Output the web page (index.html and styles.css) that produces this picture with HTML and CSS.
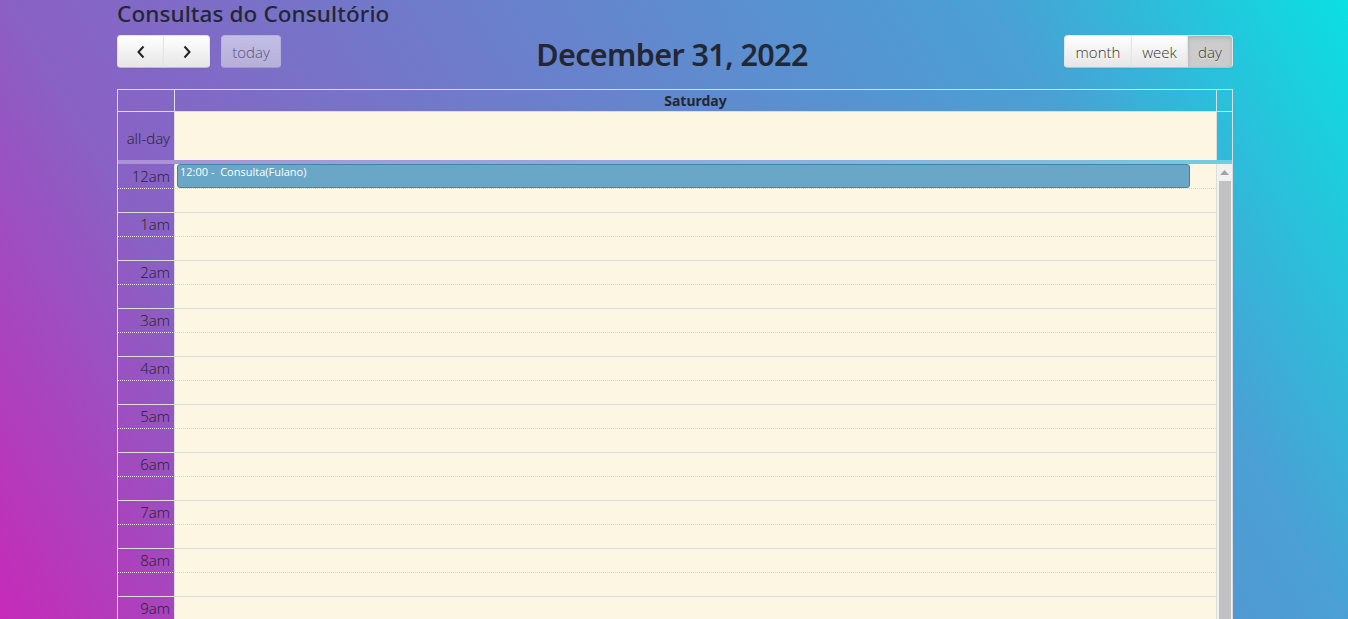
FILE: index.html
```html
<!DOCTYPE html>
<html lang="pt-BR">
<head>
<meta charset="utf-8">
<title>Consultas do Consultório</title>
<link rel="stylesheet" href="styles.css">
</head>
<body>
<div class="page">
  <h2 class="page-title">Consultas do Consultório</h2>
  <div class="toolbar">
    <div class="tb-left">
      <div class="btn-group">
        <button class="btn btn-icon" aria-label="prev"><svg width="10" height="14" viewBox="0 0 10 14"><path d="M7.5 1.5 L2.5 7 L7.5 12.5" fill="none" stroke="#222" stroke-width="2"/></svg></button>
        <button class="btn btn-icon" aria-label="next"><svg width="10" height="14" viewBox="0 0 10 14"><path d="M2.5 1.5 L7.5 7 L2.5 12.5" fill="none" stroke="#222" stroke-width="2"/></svg></button>
      </div>
      <button class="btn btn-single btn-disabled">today</button>
    </div>
    <h1 class="date-title">December 31, 2022</h1>
    <div class="tb-right">
      <div class="btn-group">
        <button class="btn">month</button>
        <button class="btn">week</button>
        <button class="btn btn-active">day</button>
      </div>
    </div>
  </div>

  <div class="cal">
    <div class="row head-row">
      <div class="axis"></div>
      <div class="day-col day-head">Saturday</div>
      <div class="gutter"></div>
    </div>
    <div class="row allday-row">
      <div class="axis axis-label">all-day</div>
      <div class="day-col allday-cell"></div>
      <div class="gutter gutter-fill"></div>
    </div>
    <div class="divider"></div>
    <div class="row body-row">
      <div class="time-grid">
        <div class="slot hour first"><div class="slot-axis">12am</div><div class="slot-cell"></div></div>
        <div class="slot half"><div class="slot-axis"></div><div class="slot-cell"></div></div>
        <div class="slot hour"><div class="slot-axis">1am</div><div class="slot-cell"></div></div>
        <div class="slot half"><div class="slot-axis"></div><div class="slot-cell"></div></div>
        <div class="slot hour"><div class="slot-axis">2am</div><div class="slot-cell"></div></div>
        <div class="slot half"><div class="slot-axis"></div><div class="slot-cell"></div></div>
        <div class="slot hour"><div class="slot-axis">3am</div><div class="slot-cell"></div></div>
        <div class="slot half"><div class="slot-axis"></div><div class="slot-cell"></div></div>
        <div class="slot hour"><div class="slot-axis">4am</div><div class="slot-cell"></div></div>
        <div class="slot half"><div class="slot-axis"></div><div class="slot-cell"></div></div>
        <div class="slot hour"><div class="slot-axis">5am</div><div class="slot-cell"></div></div>
        <div class="slot half"><div class="slot-axis"></div><div class="slot-cell"></div></div>
        <div class="slot hour"><div class="slot-axis">6am</div><div class="slot-cell"></div></div>
        <div class="slot half"><div class="slot-axis"></div><div class="slot-cell"></div></div>
        <div class="slot hour"><div class="slot-axis">7am</div><div class="slot-cell"></div></div>
        <div class="slot half"><div class="slot-axis"></div><div class="slot-cell"></div></div>
        <div class="slot hour"><div class="slot-axis">8am</div><div class="slot-cell"></div></div>
        <div class="slot half"><div class="slot-axis"></div><div class="slot-cell"></div></div>
        <div class="slot hour"><div class="slot-axis">9am</div><div class="slot-cell"></div></div>
        <div class="slot half"><div class="slot-axis"></div><div class="slot-cell"></div></div>
        <div class="slot hour"><div class="slot-axis">10am</div><div class="slot-cell"></div></div>
        <div class="slot half"><div class="slot-axis"></div><div class="slot-cell"></div></div>
        <div class="event">12:00 - &nbsp;Consulta(Fulano)</div>
      </div>
      <div class="scrollbar">
        <div class="sb-arrow"><svg width="9" height="5" viewBox="0 0 9 5"><path d="M0 5 L4.5 0 L9 5 Z" fill="#a3a3a3"/></svg></div>
        <div class="sb-thumb"></div>
      </div>
    </div>
  </div>
</div>
</body>
</html>
```

FILE: styles.css
```css
html, body {
  margin: 0;
  padding: 0;
  height: 100%;
  overflow: hidden;
}
body {
  background: linear-gradient(60deg, #c62ab8 0%, #8a60c4 21%, #4aa0d4 79%, #0ae0e2 100%);
  font-family: "Open Sans", "DejaVu Sans", sans-serif;
  color: #212529;
}
.page {
  width: 1116px;
  margin: 0 0 0 117px;
}
.page-title {
  margin: 0;
  height: 30px;
  font-family: "Noto Sans", "Open Sans", sans-serif;
  font-size: 22.5px;
  font-weight: 500;
  line-height: 28px;
  letter-spacing: 0.1px;
  color: #222733;
}
.toolbar {
  margin-top: 5px;
  height: 33px;
  display: flex;
  align-items: center;
  justify-content: space-between;
  margin-bottom: 21px;
}
.tb-left, .tb-right {
  display: flex;
  align-items: center;
  width: 280px;
}
.tb-left { gap: 11px; }
.tb-right { justify-content: flex-end; }
.date-title {
  margin: 0;
  font-family: "Noto Sans", "Open Sans", sans-serif;
  font-size: 30.5px;
  font-weight: 600;
  letter-spacing: -0.6px;
  color: #222733;
  line-height: 40px;
  padding-top: 4px;
  padding-right: 6px;
}
.btn-group { display: flex; }
.btn {
  height: 33px;
  margin: 0;
  padding: 0 10px;
  font-family: "Open Sans", sans-serif;
  font-weight: 300;
  font-size: 15px;
  color: #333;
  background-color: #f5f5f5;
  background-image: linear-gradient(to bottom, #ffffff, #e6e6e6);
  border: 1px solid;
  border-color: #e6e6e6 #e6e6e6 #bfbfbf;
  box-shadow: inset 0 1px 0 rgba(255,255,255,.2), 0 1px 2px rgba(0,0,0,.05);
  text-shadow: 0 1px 1px rgba(255,255,255,.75);
  cursor: pointer;
}
.btn-group .btn { border-radius: 0; margin-left: -1px; }
.btn-group .btn:first-child { border-radius: 4px 0 0 4px; margin-left: 0; }
.btn-group .btn:last-child { border-radius: 0 4px 4px 0; }
.btn-single { border-radius: 4px; }
.btn-icon {
  width: 47px;
  display: flex;
  align-items: center;
  justify-content: center;
}
.btn-disabled {
  opacity: .55;
  width: 60px;
  box-shadow: none;
  cursor: default;
}
.btn-active {
  background-color: #cccccc;
  background-image: none;
  box-shadow: inset 0 2px 4px rgba(0,0,0,.15), 0 1px 2px rgba(0,0,0,.05);
}
.tb-right .btn:nth-child(1) { width: 68px; }
.tb-right .btn:nth-child(2) { width: 57px; }
.tb-right .btn:nth-child(3) { width: 46px; }

/* calendar */
.cal {
  width: 1116px;
  box-sizing: border-box;
  border: 1px solid #dddddd;
  border-bottom: none;
}
.row { display: flex; }
.axis {
  width: 56px;
  flex: none;
  border-right: 1px solid #dddddd;
}
.day-col { flex: 1; }
.gutter {
  width: 15px;
  flex: none;
  border-left: 1px solid #dddddd;
}
.head-row {
  height: 22px;
  box-sizing: border-box;
  border-bottom: 1px solid #dddddd;
}
.day-head {
  text-align: center;
  font-family: "Noto Sans", "Open Sans", sans-serif;
  font-weight: 700;
  font-size: 14px;
  line-height: 21px;
  color: #222733;
}
.allday-row { height: 48px; }
.axis-label {
  font-family: "Open Sans", sans-serif;
  font-weight: 300;
  font-size: 15px;
  color: #222;
  text-align: right;
  padding-right: 4px;
  width: 52px;
  line-height: 52px;
  white-space: nowrap;
}
.allday-cell { background: #fdf6e3; }
.divider {
  height: 4px;
  background: rgba(255,255,255,.3);
}
.body-row { height: 460px; overflow: hidden; }
.time-grid {
  flex: 1;
  position: relative;
}
.slot {
  display: flex;
  height: 24px;
  box-sizing: border-box;
}
.slot-axis {
  width: 52px;
  padding-right: 4px;
  flex: none;
  border-right: 1px solid #dddddd;
  text-align: right;
  font-family: "Open Sans", sans-serif;
  font-weight: 300;
  font-size: 15px;
  line-height: 23px;
  color: #222;
  white-space: nowrap;
}
.slot-cell {
  flex: 1;
  background: #fdf6e3;
}
.slot.hour .slot-axis, .slot.hour .slot-cell { border-top: 1px solid #dddddd; }
.slot.half .slot-axis { border-top: 1px dotted rgba(255,255,255,.85); }
.slot.half .slot-cell { border-top: 1px dotted #d8d8d8; }
.slot.first .slot-axis, .slot.first .slot-cell { border-top: 1px solid transparent; }
.event {
  position: absolute;
  top: 0;
  left: 59px;
  width: 1013px;
  height: 24px;
  box-sizing: border-box;
  background: #6aa6c6;
  border: 1px solid #3a87ad;
  border-radius: 3px;
  color: #fff;
  font-family: "Open Sans", sans-serif;
  font-size: 11px;
  line-height: 14px;
  padding: 0 2px;
  white-space: nowrap;
}
.scrollbar {
  width: 15px;
  flex: none;
  border-left: 1px solid #dddddd;
  background: #f1f1f1;
  display: flex;
  flex-direction: column;
}
.sb-arrow {
  height: 17px;
  display: flex;
  align-items: center;
  justify-content: center;
}
.sb-thumb {
  margin: 0 1px 0 2px;
  flex: 1;
  background: #c1c1c1;
}
```
